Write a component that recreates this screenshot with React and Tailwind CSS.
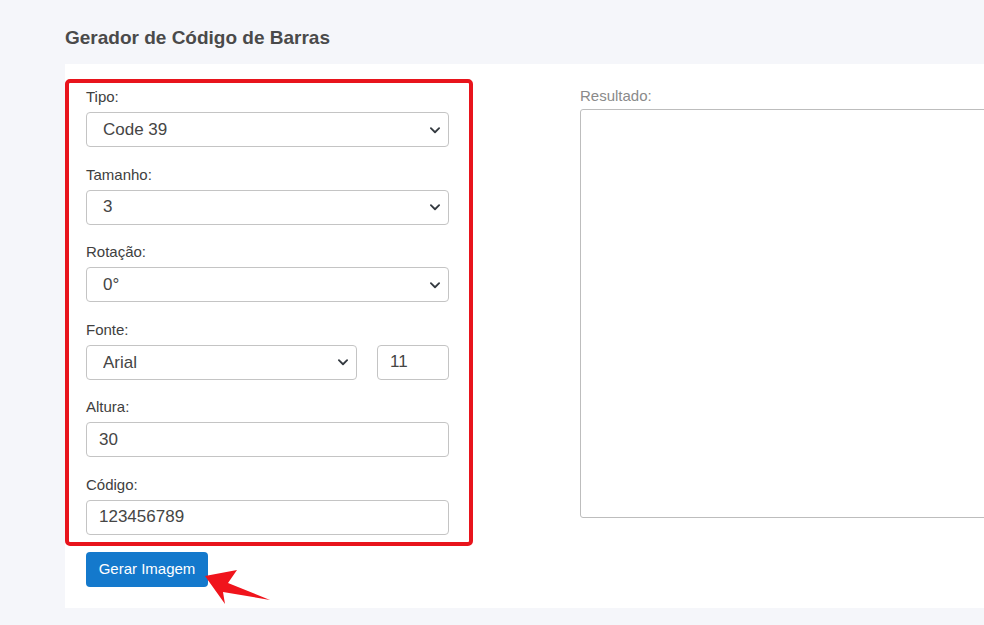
import React from "react";

const Chevron = () => (
  <svg className="pointer-events-none absolute right-[8px] top-1/2 -translate-y-1/2" width="12" height="12" viewBox="0 0 16 16">
    <path d="M2.5 5.5 L8 11 L13.5 5.5" fill="none" stroke="#343a40" strokeWidth="2.4" strokeLinecap="round" strokeLinejoin="round" />
  </svg>
);

const Select = ({ value, className = "" }) => (
  <div className={`relative ${className}`}>
    <select
      defaultValue={value}
      className="h-[35px] w-full appearance-none rounded-[4px] border border-[#c4c4c4] bg-white pl-[16px] text-[17px] text-[#454545] outline-none"
    >
      <option>{value}</option>
    </select>
    <Chevron />
  </div>
);

const Input = ({ value, className = "" }) => (
  <input
    defaultValue={value}
    className={`h-[35px] rounded-[4px] border border-[#c4c4c4] bg-white px-[12px] text-[17px] text-[#454545] outline-none ${className}`}
  />
);

const Field = ({ label, children }) => (
  <div className="mb-[17.6px] last:mb-0">
    <div className="mb-[5px] h-[20px] text-[15px] leading-[20px] text-[#404040]">{label}</div>
    {children}
  </div>
);

export default function App() {
  return (
    <div
      className="h-[625px] w-[984px] overflow-hidden bg-[#f5f6fa]"
      style={{ fontFamily: '"Liberation Sans", Arial, sans-serif' }}
    >
      <div className="pl-[65px] pt-[27px]">
        <h1 className="h-[37px] text-[19px] font-bold leading-[22px] text-[#4a4a4a]">Gerador de Código de Barras</h1>
        <div className="flex h-[544px] bg-white pt-[15px]">
          <div className="w-[408px] shrink-0">
            <div className="rounded-[5px] border-[4px] border-[#e8141c] pb-[7px] pl-[17px] pr-[20px] pt-[4px]">
              <Field label="Tipo:">
                <Select value="Code 39" />
              </Field>
              <Field label="Tamanho:">
                <Select value="3" />
              </Field>
              <Field label="Rotação:">
                <Select value="0°" />
              </Field>
              <Field label="Fonte:">
                <div className="flex gap-[20px]">
                  <Select value="Arial" className="w-[271px]" />
                  <Input value="11" className="w-[72px]" />
                </div>
              </Field>
              <Field label="Altura:">
                <Input value="30" className="w-full" />
              </Field>
              <Field label="Código:">
                <Input value="123456789" className="w-full" />
              </Field>
            </div>
            <div className="relative pl-[21px] pt-[6px]">
              <button className="h-[35px] w-[122px] rounded-[4px] bg-[#1479cc] text-[15px] text-white">
                Gerar Imagem
              </button>
              <svg className="absolute left-[138px] top-[24px]" width="70" height="40" viewBox="0 0 70 40">
                <polygon points="2,6 34,0 25,13 67,30 20,22 22,34" fill="#f0141c" />
              </svg>
            </div>
          </div>
          <div className="ml-[107px] pt-[8px]">
            <div className="mb-[5px] text-[15px] leading-[17px] text-[#8a8a8a]">Resultado:</div>
            <textarea className="h-[409px] w-[440px] resize-none rounded-[3px] border border-[#bdbdbd] outline-none" />
          </div>
        </div>
      </div>
    </div>
  );
}
